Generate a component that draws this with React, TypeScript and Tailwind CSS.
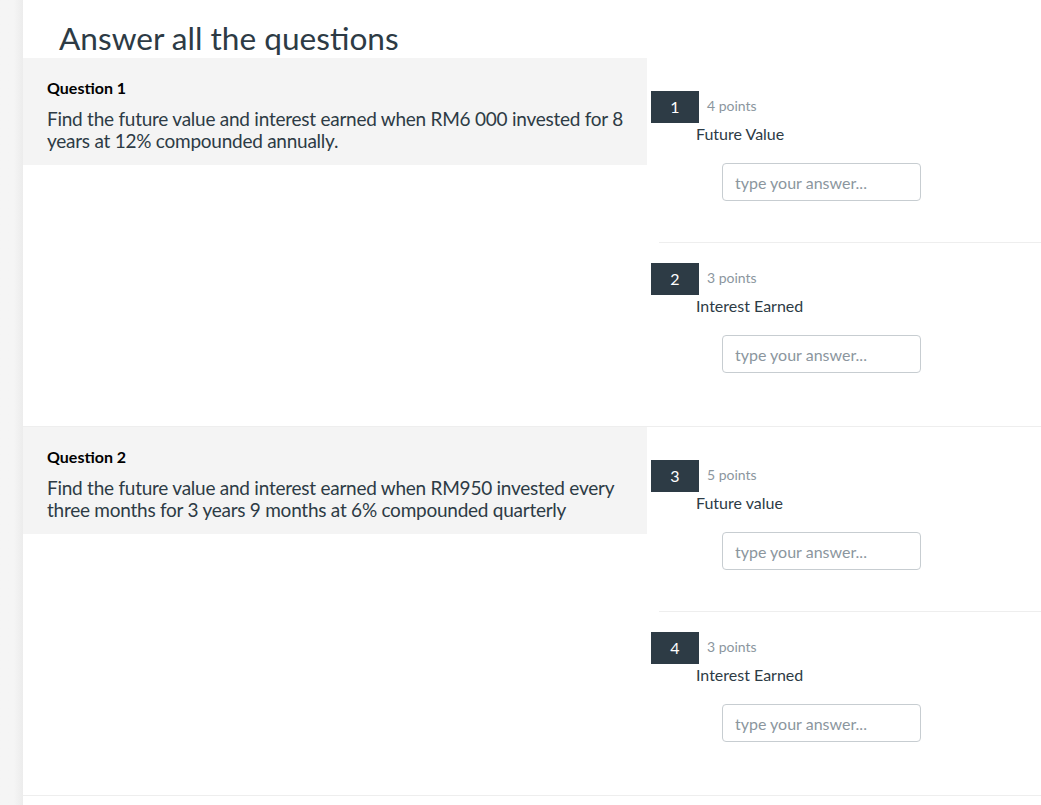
const questions = [
  {
    title: 'Question 1',
    text: 'Find the future value and interest earned when RM6 000 invested for 8 years at 12% compounded annually.',
    parts: [
      { no: 1, points: 4, label: 'Future Value' },
      { no: 2, points: 3, label: 'Interest Earned' },
    ],
  },
  {
    title: 'Question 2',
    text: 'Find the future value and interest earned when RM950 invested every three months for 3 years 9 months at 6% compounded quarterly',
    parts: [
      { no: 3, points: 5, label: 'Future value' },
      { no: 4, points: 3, label: 'Interest Earned' },
    ],
  },
];

export default function App() {
  return (
    <div
      className="flex min-h-[805px] bg-white text-[#2d3b45]"
      style={{ fontFamily: 'Lato, "Open Sans", sans-serif' }}
    >
      {/* 왼쪽 회색 띠 */}
      <div className="w-[23px] shrink-0 bg-linear-to-r from-[#f5f5f5] from-60% to-[#ececec]" />

      <div className="flex-1 min-w-0">
        <h1 className="pl-[36px] pt-[18px] text-[31.6px] leading-[40px] font-normal">
          Answer all the questions
        </h1>

        {questions.map((q) => (
          <div key={q.title} className="flex border-b border-[#eeeeee] h-[369px]">
            {/* 문제 */}
            <div className="w-[624px] shrink-0">
              <div className="bg-[#f4f4f4] h-[107px] pl-[24px] pr-[20px] pt-[20px]">
                <div className="text-[16px] leading-5 font-bold text-black">{q.title}</div>
                <p className="mt-[10px] text-[19px] leading-[22px] tracking-[-0.25px] text-[#2d3b45]">
                  {q.text}
                </p>
              </div>
            </div>

            {/* 답안 */}
            <div className="flex-1 min-w-0 pt-[13px]">
              {q.parts.map((p, i) => (
                <div key={p.no} className={i === 0 ? 'pt-[20px] pb-[41px] ml-[12px] border-b border-[#eeeeee]' : 'pt-[20px] ml-[12px]'}>
                  <div className="flex items-center -ml-[8px]">
                    <div className="w-[48px] h-[32px] bg-[#2d3b45] text-white text-[16px] flex items-center justify-center">
                      {p.no}
                    </div>
                    <span className="ml-[8px] text-[14px] leading-4 -mt-[3px] text-[#8b969e]">{p.points} points</span>
                  </div>
                  <div className="ml-[37px] text-[16px] leading-[22px]">{p.label}</div>
                  <input
                    type="text"
                    placeholder="type your answer..."
                    className="mt-[18px] ml-[63px] w-[199px] h-[38px] rounded-[4px] border border-[#c7cdd1] px-[12px] text-[16px] placeholder:text-[#8b969e] outline-none"
                  />
                </div>
              ))}
            </div>
          </div>
        ))}
      </div>
    </div>
  );
}
